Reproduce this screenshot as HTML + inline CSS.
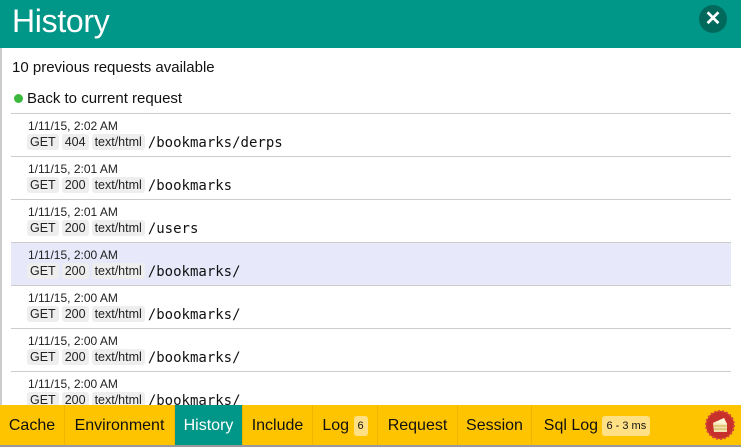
<!DOCTYPE html>
<html><head><style>
*{margin:0;padding:0;box-sizing:border-box}
body{width:741px;height:447px;overflow:hidden;background:#fff;font-family:"Liberation Sans",sans-serif;position:relative}
.hdr{position:absolute;left:0;top:0;width:741px;height:48px;background:#009688}
.hdr h1{position:absolute;left:12px;top:3px;font-weight:normal;font-size:32px;color:#fff;letter-spacing:-0.3px}
.close{position:absolute;left:699px;top:5px;width:28px;height:28px;border-radius:50%;background:#00695c;color:#fff;font-size:20px;font-weight:bold;text-align:center;line-height:28px}
.edge{position:absolute;left:0;top:48px;width:2px;height:357px;background:#ccc}
.t1{position:absolute;left:12px;top:59px;font-size:15px;color:#111}
.t2{position:absolute;left:27px;top:90px;font-size:15px;color:#111}
.dot{position:absolute;left:14px;top:94px;width:9px;height:9px;border-radius:50%;background:#3cb93c}
.row{position:absolute;left:11px;width:720px;height:43px;border-top:1px solid #ccc}
.row.hl{background:#e7e8fa}
.d{position:absolute;left:17px;top:5px;font-size:12px;color:#222}
.m{position:absolute;left:16px;top:20px;font-size:12.5px;color:#222;white-space:nowrap}
.b{display:inline-block;background:#eee;border-radius:3px;padding:1px 3px;margin-right:3px;line-height:14px}
.p{font-family:"DejaVu Sans Mono","Liberation Mono",monospace;font-size:14px;color:#111;vertical-align:-1px}
.bar{position:absolute;left:0;top:405px;width:741px;height:40px;background:#ffc400}
.bar div{position:absolute;top:0;height:40px;line-height:41px;font-size:16px;color:#111;text-align:center;border-right:1px solid #f0b400}
.bar .on{background:#009688;color:#fff}
.cnt{display:inline-block;background:#ffe085;border-radius:3px;font-size:11px;padding:0 4px;line-height:20px;vertical-align:1px}
.foot{position:absolute;left:0;top:445px;width:741px;height:2px;background:#999}
</style></head><body>
<div class="hdr"><h1>History</h1><div class="close">✕</div></div>
<div class="edge"></div>
<div class="t1">10 previous requests available</div>
<div class="dot"></div><div class="t2">Back to current request</div>
<div class="row" style="top:113px"><div class="d">1/11/15, 2:02 AM</div><div class="m"><span class="b">GET</span><span class="b">404</span><span class="b">text/html</span><span class="p">/bookmarks/derps</span></div></div>
<div class="row" style="top:156px"><div class="d">1/11/15, 2:01 AM</div><div class="m"><span class="b">GET</span><span class="b">200</span><span class="b">text/html</span><span class="p">/bookmarks</span></div></div>
<div class="row" style="top:199px"><div class="d">1/11/15, 2:01 AM</div><div class="m"><span class="b">GET</span><span class="b">200</span><span class="b">text/html</span><span class="p">/users</span></div></div>
<div class="row hl" style="top:242px"><div class="d">1/11/15, 2:00 AM</div><div class="m"><span class="b">GET</span><span class="b">200</span><span class="b">text/html</span><span class="p">/bookmarks/</span></div></div>
<div class="row" style="top:285px"><div class="d">1/11/15, 2:00 AM</div><div class="m"><span class="b">GET</span><span class="b">200</span><span class="b">text/html</span><span class="p">/bookmarks/</span></div></div>
<div class="row" style="top:328px"><div class="d">1/11/15, 2:00 AM</div><div class="m"><span class="b">GET</span><span class="b">200</span><span class="b">text/html</span><span class="p">/bookmarks/</span></div></div>
<div class="row" style="top:371px"><div class="d">1/11/15, 2:00 AM</div><div class="m"><span class="b">GET</span><span class="b">200</span><span class="b">text/html</span><span class="p">/bookmarks/</span></div></div>
<div class="bar">
<div style="left:0;width:65px">Cache</div>
<div style="left:65px;width:110px">Environment</div>
<div class="on" style="left:175px;width:68px">History</div>
<div style="left:243px;width:70px">Include</div>
<div style="left:313px;width:65px">Log <span class="cnt">6</span></div>
<div style="left:378px;width:80px">Request</div>
<div style="left:458px;width:74px">Session</div>
<div style="left:532px;width:130px;border:none">Sql Log <span class="cnt">6 - 3 ms</span></div>
<svg style="position:absolute;left:705px;top:5px" width="30" height="30" viewBox="0 0 30 30"><circle cx="15" cy="15" r="14" fill="#c8302c" stroke="#d84a3a" stroke-dasharray="2 2" stroke-width="2"/><path d="M8 13 L19 8 L22 14 L22 22 L9 22 Z" fill="#f3e3b0"/><path d="M9 16h13M9 19h13" stroke="#d9b860" stroke-width="1.3"/><path d="M8 13 L19 8 L22 14 Z" fill="#fff6d6"/></svg>
</div>
<div class="foot"></div>
</body></html>
